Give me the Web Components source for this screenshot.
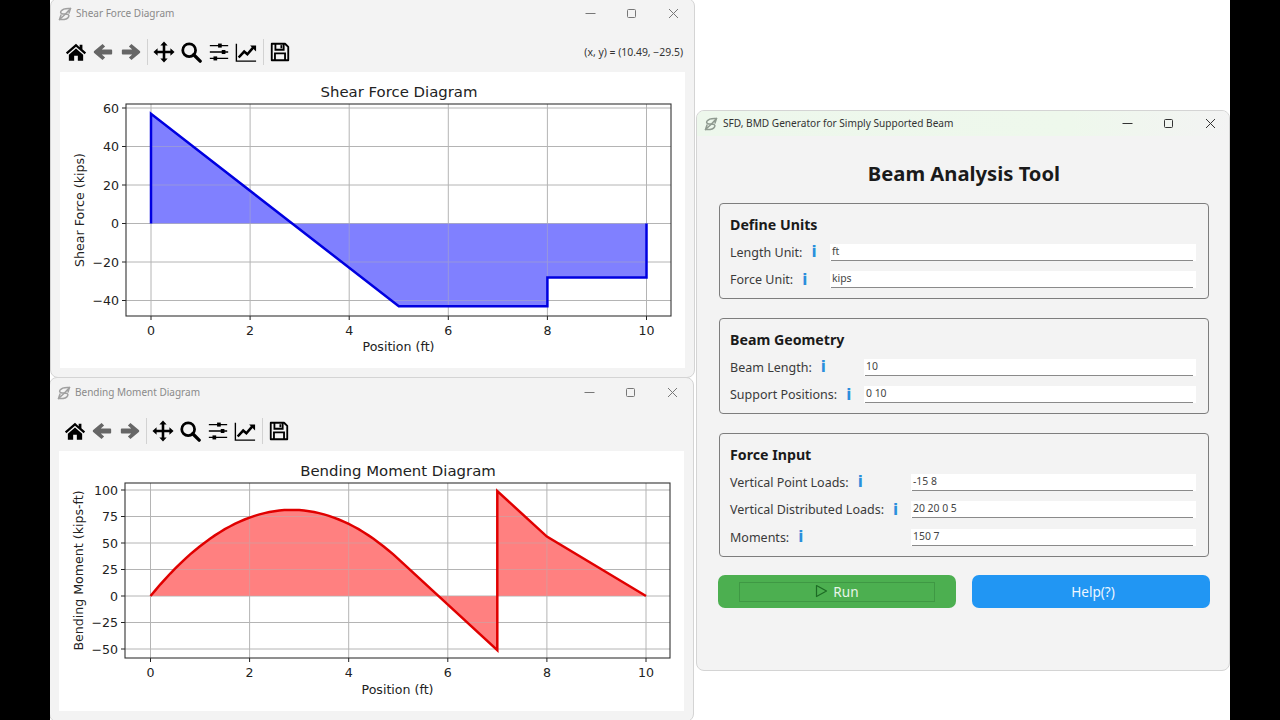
<!DOCTYPE html>
<html><head><meta charset="utf-8"><title>Beam</title>
<style>html,body{margin:0;padding:0;background:#fff}</style></head>
<body>
<desk-top>
  <app-window slot="w" style="left:0;top:-2px;width:645px;height:380px" title-text="Shear Force Diagram" dim>
    <plot-toolbar coords="(x, y) = (10.49, −29.5)"></plot-toolbar>
    <plot-chart kind="sfd"></plot-chart>
  </app-window>
  <app-window slot="w" style="left:-1px;top:377px;width:645px;height:345px" title-text="Bending Moment Diagram" dim>
    <plot-toolbar></plot-toolbar>
    <plot-chart kind="bmd"></plot-chart>
  </app-window>
  <app-window slot="w" style="left:646px;top:110px;width:534px;height:561px" title-text="SFD, BMD Generator for Simply Supported Beam" tint>
    <beam-form>
      <h-title slot="title">Beam Analysis Tool</h-title>
      <form-group heading="Define Units" style="--label:100px">
        <form-row label="Length Unit:">ft</form-row>
        <form-row label="Force Unit:">kips</form-row>
      </form-group>
      <form-group heading="Beam Geometry" style="--label:134px">
        <form-row label="Beam Length:">10</form-row>
        <form-row label="Support Positions:">0 10</form-row>
      </form-group>
      <form-group heading="Force Input" style="--label:181px">
        <form-row label="Vertical Point Loads:">-15 8</form-row>
        <form-row label="Vertical Distributed Loads:">20 20 0 5</form-row>
        <form-row label="Moments:">150 7</form-row>
      </form-group>
      <action-bar></action-bar>
    </beam-form>
  </app-window>
</desk-top>
<script>
const UI='"Noto Sans","Open Sans",sans-serif';
const def=(n,f)=>customElements.define(n,class extends HTMLElement{constructor(){super();this.attachShadow({mode:'open'})}connectedCallback(){f.call(this,this.shadowRoot)}});
def('desk-top',function(r){r.innerHTML=`<style>
:host{display:flex;width:1280px;height:720px;overflow:hidden;background:#fff;font-family:${UI}}
.bar{width:50px;background:#000;flex:none;position:relative;z-index:2}
.mid{flex:1;position:relative}
</style><div class="bar"></div><div class="mid"><slot name="w"></slot></div><div class="bar"></div>`});
const logo=c=>`<svg width="14" height="14" viewBox="0 0 14 14" fill="none" stroke="${c}" stroke-width="1.5" stroke-linecap="round" stroke-linejoin="round"><path d="M12.5 1.5C9 1.2 4.5 2 3 4.2 1.8 6 3.6 7 7 7c3.3 0 4.6 1 3.6 2.8C9.4 12 5 12.8 1.5 12.5"/><path d="M12.5 1.5 7.5 7 1.5 12.5M12.5 1.5 11 6M1.5 12.5 3 8"/></svg>`;
def('app-window',function(r){
const dim=this.hasAttribute('dim'),tint=this.hasAttribute('tint');
const c=dim?'#8a8a8a':'#333';
r.innerHTML=`<style>
:host{position:absolute;display:flex;flex-direction:column;box-sizing:border-box;background:#f3f3f3;border:1px solid #d4d4d4;border-radius:8px;overflow:hidden}
.t{display:flex;align-items:center;height:${tint?25:29}px;flex:none;padding-left:7px;${tint?'margin-right:-2px;background:linear-gradient(90deg,#edf7ec,#eef8ec 70%,#f3f3f3)':''}}
.n{margin-left:${dim?4:5}px;font-size:${dim?10:10.1}px;color:${c};flex:1;white-space:nowrap;position:relative;top:-1px}
.b{width:41.6px;height:100%;display:flex;align-items:center;justify-content:center}
svg.c{stroke:${dim?'#777':'#333'};fill:none;stroke-width:1}
</style><div class="t">${logo(dim?'#a0a0a0':'#8f9a90')}<span class="n">${this.getAttribute('title-text')}</span>
<div class="b"><svg class="c" width="11" height="11"><path d="M.5 5.5h10"/></svg></div>
<div class="b"><svg class="c" width="11" height="11"><rect x="1.5" y="1.5" width="8" height="8" rx="1"/></svg></div>
<div class="b"><svg class="c" width="11" height="11"><path d="M1 1l9 9M10 1l-9 9"/></svg></div></div><slot></slot>`});
const ic={
home:`<path fill="#000" d="M12 3 1 12.6l1.6 1.9L12 6.4l9.4 8.1 1.6-1.9-4-3.5V4h-3v2.7Z"/><path fill="#000" d="M12 8.3 4.2 15v6.5H10V16h4v5.5h5.8V15Z"/>`,
back:`<path fill="#666" d="M11.5 3.4 2.4 11a1.3 1.3 0 0 0 0 2l9.1 7.6 2.8-2.7-3.6-3.3H21a1 1 0 0 0 1-1V10.4a1 1 0 0 0-1-1H10.7l3.6-3.3Z"/>`,
fwd:`<path fill="#666" d="M12.5 3.4 21.6 11a1.3 1.3 0 0 1 0 2l-9.1 7.6-2.8-2.7 3.6-3.3H3a1 1 0 0 1-1-1V10.4a1 1 0 0 1 1-1H13.3L9.7 6.1Z"/>`,
move:`<path fill="#000" d="M12 .5 16 5h-2.6v5.6H19V8l4.5 4-4.5 4v-2.6h-5.6V19H16l-4 4.5L8 19h2.6v-5.6H5V16L.5 12 5 8v2.6h5.6V5H8Z"/>`,
zoom:`<g fill="none" stroke="#000"><circle cx="10" cy="10" r="7" stroke-width="3"/><path d="M15 15l7 7" stroke-width="3.6" stroke-linecap="round"/></g>`,
opts:`<g stroke="#000" stroke-width="1.4"><path d="M2 5h20M2 12h20M2 19h20"/></g><g fill="#000"><rect x="11" y="2.8" width="4" height="4.4"/><rect x="15" y="9.8" width="4" height="4.4"/><rect x="6" y="16.8" width="4" height="4.4"/></g>`,
edit:`<path d="M1.5 3v19H23" fill="none" stroke="#000" stroke-width="1.5"/><path d="M4 18l6-6.5 3.5 3L20 7" fill="none" stroke="#000" stroke-width="2.8"/><path fill="#000" d="M16.5 5H23v6.5Z"/>`,
save:`<g fill="none" stroke="#000" stroke-width="2"><path d="M3 3h14.5L21 6.5V21H3Z" stroke-linejoin="round"/><path d="M7 3v6.5h9V3M6.5 21v-7.5h11V21"/></g><path fill="#000" d="M12.5 4.5h2v3.5h-2Z"/>`};
def('plot-toolbar',function(r){
const b=k=>`<span class="i"><svg width="22" height="22" viewBox="0 0 24 24">${ic[k]}</svg></span>`;
const co=this.getAttribute('coords');
r.innerHTML=`<style>
:host{display:flex;align-items:center;height:40px;margin-top:4px;flex:none;padding:0 11px 0 11px;box-sizing:border-box}
.i{width:27.5px;height:28px;display:flex;align-items:center;justify-content:center}
.s{width:5.5px;height:26px;display:flex;justify-content:center}
.s:before{content:"";width:1px;background:#d2d2d2}
.c{margin-left:auto;font-size:10.4px;color:#333;white-space:nowrap}
</style>${b('home')}${b('back')}${b('fwd')}<span class="s"></span>${b('move')}${b('zoom')}${b('opts')}${b('edit')}<span class="s" style="width:6.5px"></span>${b('save')}${co?`<span class="c">${co}</span>`:''}`});
def('plot-chart',function(r){
const sfd=this.getAttribute('kind')==='sfd';
const H=sfd?296:260, ax={l:66,r:611,t:32,b:sfd?244:207};
const X=x=>(sfd?91:91.5)+x*49.55;
const Y=sfd?v=>151.5-v*1.925:v=>145-v*1.06;
const yt=sfd?[60,40,20,0,-20,-40]:[100,75,50,25,0,-25,-50];
let pts=[];
if(sfd){pts=[[0,0],[0,57],[5,-43],[8,-43],[8,-28],[10,-28],[10,0]]}
else{pts=[[0,0]];for(let x=.1;x<=5.001;x+=.1)pts.push([x,57*x-10*x*x]);pts.push([7,-51],[7,99],[8,56],[10,0])}
const P=pts.map(p=>X(p[0]).toFixed(1)+','+Y(p[1]).toFixed(1)).join(' ');
const col=sfd?'#0000e0':'#e00000',fill=sfd?'#8080ff':'#ff8080';
let g='';
for(const x of [0,2,4,6,8,10]){const px=X(x).toFixed(1);
g+=`<path d="M${px} ${ax.t}V${ax.b}" stroke="#b4b4b4"/><path d="M${px} ${ax.b}v4" stroke="#222"/><text x="${px}" y="${ax.b+19}" text-anchor="middle">${x}</text>`}
for(const v of yt){const py=Y(v).toFixed(1);
g+=`<path d="M${ax.l} ${py}H${ax.r}" stroke="#b4b4b4"/><path d="M${ax.l-4} ${py}H${ax.l}" stroke="#222"/><text x="${ax.l-7}" y="${+py+4.6}" text-anchor="end">${String(v).replace('-','−')}</text>`}
const title=sfd?'Shear Force Diagram':'Bending Moment Diagram';
const yl=sfd?'Shear Force (kips)':'Bending Moment (kips-ft)';
const cy=(ax.t+ax.b)/2;
r.innerHTML=`<style>
:host{display:block;margin:0 9px;background:#fff;height:${H}px;flex:none}
svg{display:block;font-family:"DejaVu Sans",sans-serif;font-size:12.6px;fill:#222}
</style><svg width="625" height="${H}" viewBox="0 0 625 ${H}">
<polygon points="${P}" fill="${fill}"/>
${g}
<polygon points="${P}" fill="${fill}" fill-opacity=".55" />
<polyline points="${P}" fill="none" stroke="${col}" stroke-width="2.5" stroke-linejoin="miter"/>
<rect x="${ax.l}" y="${ax.t}" width="${ax.r-ax.l}" height="${ax.b-ax.t}" fill="none" stroke="#333" stroke-width="1.1"/>
<text x="${(ax.l+ax.r)/2+.5}" y="${ax.t-7}" text-anchor="middle" font-size="14.9">${title}</text>
<text x="${(ax.l+ax.r)/2}" y="${H-17}" text-anchor="middle">Position (ft)</text>
<text transform="translate(23.5 ${cy}) rotate(-90)" text-anchor="middle">${yl}</text>
</svg>`});
def('beam-form',function(r){r.innerHTML=`<style>
:host{display:flex;flex-direction:column;gap:19px;padding:0 20px 0 22px;flex:1}
.h{display:flex;align-items:center;justify-content:center;margin-top:11.5px;margin-bottom:-13.5px;height:50px}
</style><div class="h"><slot name="title"></slot></div><slot></slot>`});
def('h-title',function(r){r.innerHTML=`<style>:host{display:block;font-size:20.2px;font-weight:700;color:#1a1a1a}</style><slot></slot>`});
def('form-group',function(r){r.innerHTML=`<style>
:host{display:block;box-sizing:border-box;border:1px solid #7d7d7d;border-radius:4px;padding:10px 12px 4.5px 10px}
.g{height:22px;line-height:21px;font-size:14.2px;font-weight:700;color:#1a1a1a;margin-bottom:2.5px}
</style><div class="g">${this.getAttribute('heading')}</div><slot></slot>`});
def('form-row',function(r){r.innerHTML=`<style>
:host{display:grid;grid-template-columns:var(--label) 1fr;align-items:center;height:27.5px;font-size:12.5px;color:#3a3a3a}
.l{display:flex;align-items:center;gap:8px;white-space:nowrap}
.i{font:700 15px "DejaVu Sans",sans-serif;color:#2a8fdc;padding-left:1px}
.f{box-sizing:border-box;height:17px;background:#fff;font-size:10.4px;line-height:15px;color:#444;padding-left:2px;position:relative}
.f:after{content:"";position:absolute;left:1px;right:3px;bottom:0;height:1px;background:#8a8a8a}
</style><div class="l"><span>${this.getAttribute('label')}</span><span class="i">i</span></div><div class="f"><slot></slot></div>`});
def('action-bar',function(r){r.innerHTML=`<style>
:host{display:grid;grid-template-columns:1fr 1fr;gap:16px;margin:-1px -1px 0 -1px;font-size:13.6px}
.b{height:33px;border-radius:7px;display:flex;align-items:center;justify-content:center;position:relative;color:#e8f5e9}
.r{background:#4caf50;gap:5px}.h{background:#2196f3;color:#eef7ff;padding-left:4px}
.r:before{content:"";position:absolute;left:21px;right:21px;top:7px;bottom:6px;border:1px solid rgba(40,110,45,.35)}
</style><div class="b r"><svg width="13" height="14" viewBox="0 0 13 14"><path d="M1.5 1.5 11.5 7 1.5 12.5Z" fill="none" stroke="#1d6b25" stroke-width="1.2" stroke-linejoin="round"/></svg><span>Run</span></div><div class="b h"><span>Help(?)</span></div>`});
</script>
</body></html>
